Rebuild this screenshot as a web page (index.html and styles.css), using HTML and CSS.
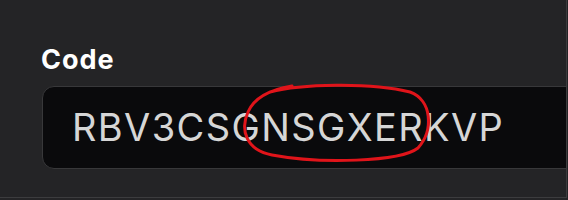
FILE: index.html
```html
<!DOCTYPE html>
<html lang="en">
<head>
  <meta charset="UTF-8" />
  <title>Code</title>
  <link rel="stylesheet" href="styles.css">
</head>
<body>
  <div class="panel">
    <label class="field-label" for="code">Code</label>
    <div class="code-box" id="code">RBV3CSGNSGXERKVP</div>

    <!-- hand-drawn marker around part of the code -->
    <svg class="scribble" width="568" height="200" viewBox="0 0 568 200">
      <path d="M270 92 C300 84 370 82 410 92 C432 100 434 130 418 148 C400 162 320 164 272 155 C246 150 240 130 248 112 C254 98 268 90 292 86"
            fill="none" stroke="#e0141a" stroke-width="3" stroke-linecap="round" />
    </svg>
  </div>
</body>
</html>
```

FILE: styles.css
```css
body {
  margin: 0;
  padding: 0;
  background: #242426;
  font-family: Inter, "Open Sans", sans-serif;
}
.panel {
  position: relative;
  width: 566px;
  height: 197px;
  border-right: 1px solid #3c3c3e;
  border-bottom: 1px solid #3c3c3e;
  overflow: hidden;
  padding: 0;
}
.field-label {
  display: block;
  margin: 44px 0 0 41px;
  color: #fff;
  font-size: 27px;
  font-weight: 700;
  line-height: 32px;
  letter-spacing: 1px;
}
.code-box {
  box-sizing: border-box;
  margin: 10px 0 0 42px;
  width: 600px;
  height: 83px;
  background: #0a0a0c;
  border: 1px solid #38383a;
  border-radius: 12px;
  color: #d6d6d6;
  font-size: 38px;
  line-height: 81px;
  padding-left: 29px;
  letter-spacing: 1.4px;
}
.scribble {
  position: absolute;
  left: 0;
  top: 0;
  pointer-events: none;
}
```
